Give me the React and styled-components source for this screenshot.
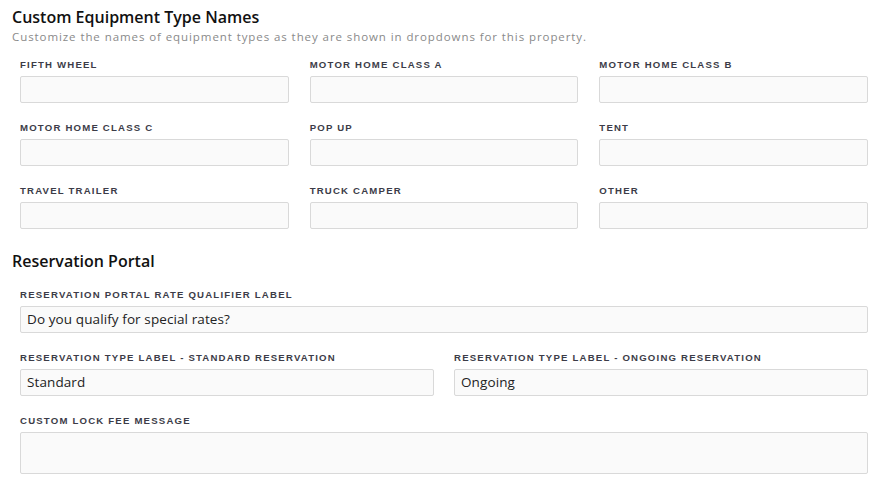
import React from "react";
import styled, { createGlobalStyle } from "styled-components";

const Global = createGlobalStyle`
  html, body { margin: 0; padding: 0; background: #fff; }
  body { font-family: "Open Sans", "Liberation Sans", sans-serif; }
  * { box-sizing: border-box; }
`;

const Page = styled.div`
  padding: 7px 15px 10px 12px;
  width: 883px;
`;

const Section = styled.section`
  display: flex;
  flex-direction: column;
  margin-top: ${(p) => p.$top || 0}px;
`;

const Heading = styled.h2`
  margin: 0;
  font-family: "Open Sans", sans-serif;
  font-size: ${(p) => p.$size || 16}px;
  font-weight: 600;
  line-height: 20px;
  color: #111;
  letter-spacing: 0;
`;

const Subtitle = styled.p`
  margin: 2px 0 0;
  font-family: "Open Sans", sans-serif;
  font-size: 11.5px;
  line-height: 16px;
  letter-spacing: 0.92px;
  color: #8a8a8a;
`;

const Grid = styled.div`
  display: grid;
  grid-template-columns: repeat(${(p) => p.$cols}, 1fr);
  column-gap: ${(p) => p.$gap}px;
  row-gap: 19px;
  padding-left: 8px;
  margin-top: ${(p) => p.$top}px;
`;

const Field = styled.label`
  display: flex;
  flex-direction: column;
  gap: 5px;
`;

const Label = styled.span`
  font-family: "Liberation Sans", Arial, sans-serif;
  font-size: 9.6px;
  font-weight: 700;
  line-height: 12px;
  letter-spacing: 1.2px;
  text-transform: uppercase;
  color: #3c3c48;
`;

const Input = styled.input`
  height: 27px;
  width: 100%;
  border: 1px solid #d9d9d9;
  border-radius: 2px;
  background: #fafafa;
  padding: 0 6px 2px;
  font-family: "Open Sans", sans-serif;
  font-size: 13.5px;
  letter-spacing: 0.1px;
  color: #222;
  outline: none;
`;

const TextArea = styled.textarea`
  height: 42px;
  width: 100%;
  border: 1px solid #d9d9d9;
  border-radius: 2px;
  background: #fafafa;
  resize: none;
  padding: 5px 6px;
  font-family: "Open Sans", sans-serif;
  font-size: 13.5px;
  color: #222;
  outline: none;
  display: block;
`;

const equipment = [
  "Fifth Wheel",
  "Motor Home Class A",
  "Motor Home Class B",
  "Motor Home Class C",
  "Pop Up",
  "Tent",
  "Travel Trailer",
  "Truck Camper",
  "Other",
];

export default function App() {
  return (
    <Page>
      <Global />
      <Section>
        <Heading>Custom Equipment Type Names</Heading>
        <Subtitle>
          Customize the names of equipment types as they are shown in dropdowns for this property.
        </Subtitle>
        <Grid $cols={3} $gap={21} $top={14}>
          {equipment.map((name) => (
            <Field key={name}>
              <Label>{name}</Label>
              <Input type="text" defaultValue="" />
            </Field>
          ))}
        </Grid>
      </Section>
      <Section $top={22}>
        <Heading $size={16}>Reservation Portal</Heading>
        <Grid $cols={1} $gap={20} $top={18}>
          <Field>
            <Label>Reservation Portal Rate Qualifier Label</Label>
            <Input type="text" defaultValue="Do you qualify for special rates?" />
          </Field>
        </Grid>
        <Grid $cols={2} $gap={20} $top={19}>
          <Field>
            <Label>Reservation Type Label - Standard Reservation</Label>
            <Input type="text" defaultValue="Standard" />
          </Field>
          <Field>
            <Label>Reservation Type Label - Ongoing Reservation</Label>
            <Input type="text" defaultValue="Ongoing" />
          </Field>
        </Grid>
        <Grid $cols={1} $gap={20} $top={19}>
          <Field>
            <Label>Custom Lock Fee Message</Label>
            <TextArea defaultValue="" />
          </Field>
        </Grid>
      </Section>
    </Page>
  );
}
